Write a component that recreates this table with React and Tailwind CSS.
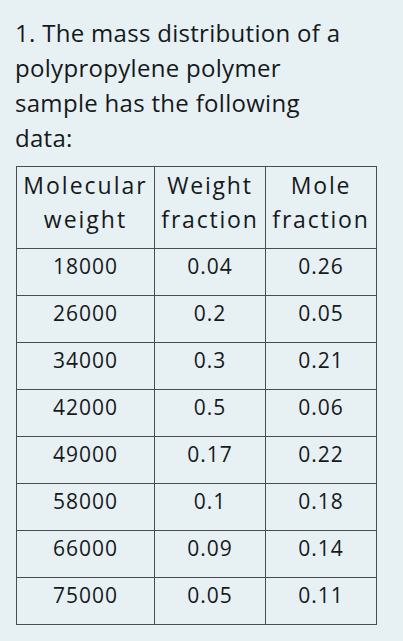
export default function App() {
  const rows = [
    ["18000", "0.04", "0.26"],
    ["26000", "0.2", "0.05"],
    ["34000", "0.3", "0.21"],
    ["42000", "0.5", "0.06"],
    ["49000", "0.17", "0.22"],
    ["58000", "0.1", "0.18"],
    ["66000", "0.09", "0.14"],
    ["75000", "0.05", "0.11"],
  ];
  return (
    <div
      className="w-[403px] h-[641px] bg-[#e7f1f4] text-[#16191b] overflow-hidden"
      style={{ fontFamily: '"Open Sans", sans-serif' }}
    >
      <p className="pl-[15px] pt-[15px] text-[24px] leading-[35px] tracking-[0.3px] w-[345px]">
        1. The mass distribution of a polypropylene polymer sample has the following data:
      </p>
      <table className="ml-[16px] mt-[11px] border-collapse text-center">
        <thead>
          <tr className="h-[82px]">
            <th className="w-[138px] border-[1.5px] border-[#4a4d4f] font-medium text-[23px] leading-[34px] tracking-[2px] align-top pt-[1px]">
              Molecular<br />weight
            </th>
            <th className="w-[111px] border-[1.5px] border-[#4a4d4f] font-medium text-[23px] leading-[34px] tracking-[1.8px] align-top pt-[1px] whitespace-nowrap">
              Weight<br />fraction
            </th>
            <th className="w-[111px] border-[1.5px] border-[#4a4d4f] font-medium text-[23px] leading-[34px] tracking-[1.8px] align-top pt-[1px] whitespace-nowrap">
              Mole<br />fraction
            </th>
          </tr>
        </thead>
        <tbody>
          {rows.map((r, i) => (
            <tr key={i} className="h-[47px]">
              {r.map((c, j) => (
                <td
                  key={j}
                  className="border-[1.5px] border-[#4a4d4f] text-[21px] leading-[24px] tracking-[1px] align-top pt-[5px]"
                >
                  {c}
                </td>
              ))}
            </tr>
          ))}
        </tbody>
      </table>
    </div>
  );
}
